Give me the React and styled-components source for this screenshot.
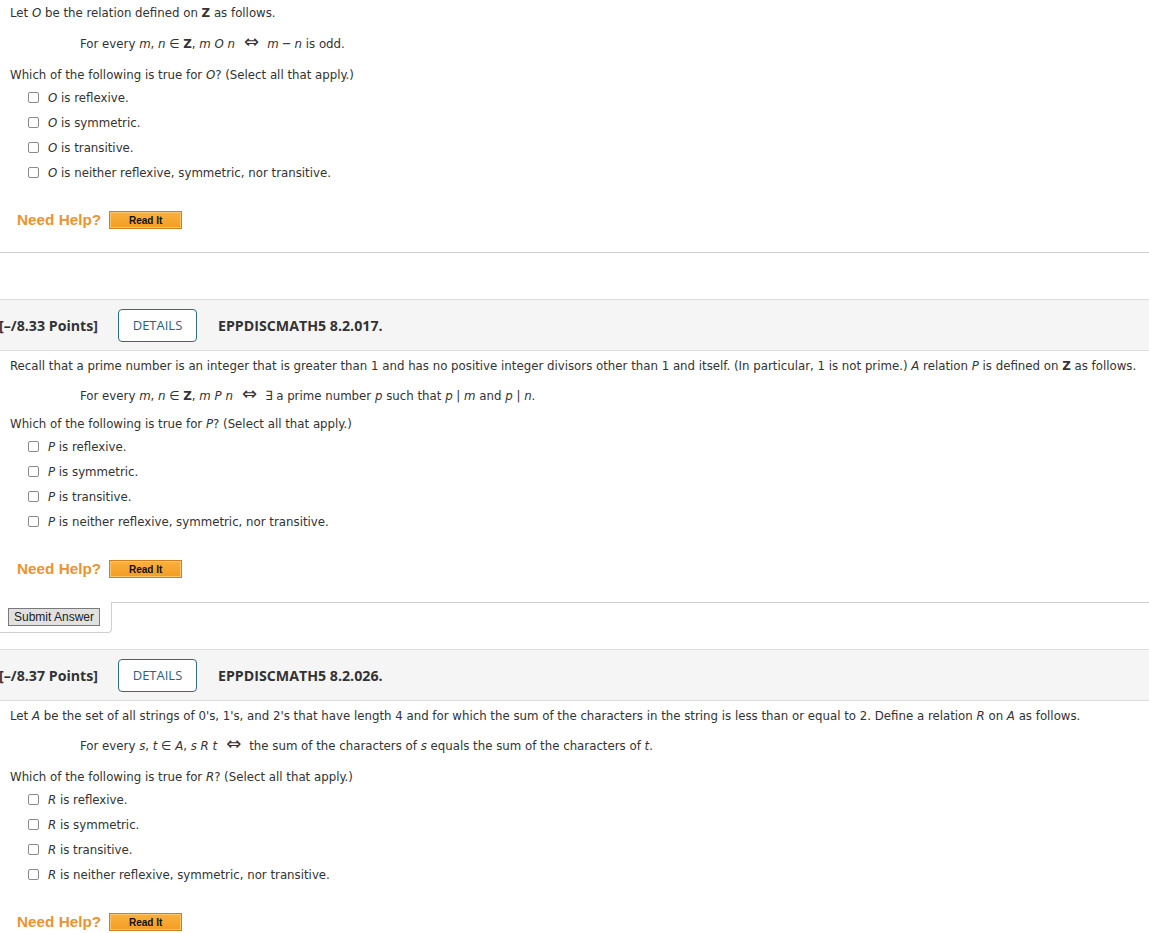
import React from 'react';
import styled, { createGlobalStyle } from 'styled-components';

const GlobalStyle = createGlobalStyle`
  html, body {
    margin: 0;
    padding: 0;
    background: #fff;
  }
  body {
    font-family: 'DejaVu Sans Condensed', 'DejaVu Sans', Verdana, sans-serif;
    font-size: 13.1px;
    color: #333;
    overflow: hidden;
  }
`;

const Page = styled.div`
  width: 1149px;
`;

const Header = styled.div`
  display: flex;
  align-items: center;
  height: 50px;
  background: #f5f5f5;
  border-top: 1px solid #dcdcdc;
  border-bottom: 1px solid #dcdcdc;
  font-family: 'Open Sans', sans-serif;
  color: #333;
`;

const Points = styled.span`
  font-weight: 700;
  font-size: 14.2px;
  margin-left: -1px;
  width: 119px;
`;

const DetailsButton = styled.button`
  height: 33px;
  width: 79px;
  border: 1px solid #2f6b88;
  border-radius: 4px;
  background: #fff;
  color: #2c5f7c;
  font-family: 'Open Sans', sans-serif;
  font-size: 13px;
  padding: 0;
  margin-right: 21px;
`;

const Code = styled.span`
  font-weight: 700;
  font-size: 14.2px;
`;

const Body = styled.div`
  padding: ${p => p.$top}px 0 0 10px;
`;

const Line = styled.div`
  line-height: 16px;
  height: 16px;
  white-space: nowrap;
  margin-top: ${p => p.$gap || 0}px;
  padding-left: ${p => p.$indent || 0}px;
`;

const Arrow = styled.span`
  font-family: 'DejaVu Sans', sans-serif;
  font-size: 18px;
  line-height: 0;
  margin: 0 8px 0 9px;
`;

const Op = styled.span`
  margin: 0 3px;
`;

const Options = styled.div`
  margin-top: 2px;
  padding-left: 18px;
`;

const Option = styled.label`
  display: flex;
  align-items: center;
  height: 25px;
  white-space: nowrap;
`;

const Box = styled.span`
  width: 9px;
  height: 9px;
  border: 1px solid #8a8a8a;
  border-radius: 2px;
  background: #fff;
  margin-right: 9px;
`;

const HelpRow = styled.div`
  display: flex;
  align-items: center;
  height: 24px;
  margin-top: 23px;
  padding-left: 7px;
  gap: 8px;
`;

const NeedHelp = styled.span`
  font-family: 'Liberation Sans', Arial, sans-serif;
  font-weight: 700;
  font-size: 15.3px;
  color: #ec9331;
`;

const ReadIt = styled.button`
  width: 73px;
  height: 18px;
  padding: 0;
  border: 1px solid #d07f1c;
  box-shadow: inset 0 0 0 1px #fbc56b;
  background: linear-gradient(#f9b13f, #f49c23);
  font-family: 'Liberation Sans', Arial, sans-serif;
  font-weight: 700;
  font-size: 10px;
  color: #111;
`;

const Footer = styled.div`
  display: flex;
  margin-top: ${p => p.$gap}px;
  margin-bottom: 16px;
  height: 31px;
`;

const SubmitTab = styled.div`
  display: flex;
  align-items: center;
  box-sizing: border-box;
  width: 112px;
  height: 31px;
  padding-left: 8px;
  border-right: 1px solid #cfcfcf;
  border-bottom: 1px solid #cfcfcf;
  border-bottom-right-radius: 4px;
`;

const SubmitButton = styled.button`
  font-family: 'Liberation Sans', Arial, sans-serif;
  font-size: 12px;
  color: #222;
  background: #e1e1e1;
  border: 1px solid #7a7a7a;
  padding: 0 5px;
  height: 18px;
  line-height: 16px;
`;

const FooterRule = styled.div`
  flex: 1;
  border-top: 1px solid #cfcfcf;
`;

const Bold = styled.b``;

const Question = ({ header, top, prompt, formula, target, options, submit, gap, footerGap }) => (
  <section>
    {header && (
      <Header>
        <Points>{header.points}</Points>
        <DetailsButton>DETAILS</DetailsButton>
        <Code>{header.code}</Code>
      </Header>
    )}
    <Body $top={top}>
      <Line>{prompt}</Line>
      <Line $gap={gap[0]} $indent={70}>{formula}</Line>
      <Line $gap={gap[1]}>Which of the following is true for <i>{target}</i>? (Select all that apply.)</Line>
      <Options>
        {options.map((o, i) => (
          <Option key={i}>
            <Box />
            <span><i>{target}</i> is {o}</span>
          </Option>
        ))}
      </Options>
      <HelpRow>
        <NeedHelp>Need Help?</NeedHelp>
        <ReadIt>Read It</ReadIt>
      </HelpRow>
    </Body>
    <Footer $gap={footerGap}>
      {submit && (
        <SubmitTab>
          <SubmitButton>Submit Answer</SubmitButton>
        </SubmitTab>
      )}
      <FooterRule />
    </Footer>
  </section>
);

const opts = ['reflexive.', 'symmetric.', 'transitive.', 'neither reflexive, symmetric, nor transitive.'];

export default function App() {
  return (
    <Page>
      <GlobalStyle />
      <Question
        top={5}
        gap={[15, 15]}
        footerGap={20}
        target="O"
        options={opts}
        prompt={<>Let <i>O</i> be the relation defined on <Bold>Z</Bold> as follows.</>}
        formula={<>For every <i>m</i>, <i>n</i> ∈ <Bold>Z</Bold>, <i>m</i> <i>O</i> <i>n</i><Arrow>⇔</Arrow><i>m</i><Op>−</Op><i>n</i> is odd.</>}
      />
      <Question
        header={{ points: '[–/8.33 Points]', code: 'EPPDISCMATH5 8.2.017.' }}
        top={7}
        gap={[14, 12]}
        footerGap={21}
        target="P"
        options={opts}
        submit
        prompt={<>Recall that a prime number is an integer that is greater than 1 and has no positive integer divisors other than 1 and itself. (In particular, 1 is not prime.) <i>A</i> relation <i>P</i> is defined on <Bold>Z</Bold> as follows.</>}
        formula={<>For every <i>m</i>, <i>n</i> ∈ <Bold>Z</Bold>, <i>m</i> <i>P</i> <i>n</i><Arrow>⇔</Arrow>∃ a prime number <i>p</i> such that <i>p</i> | <i>m</i> and <i>p</i> | <i>n</i>.</>}
      />
      <Question
        header={{ points: '[–/8.37 Points]', code: 'EPPDISCMATH5 8.2.026.' }}
        top={7}
        gap={[14, 15]}
        footerGap={20}
        target="R"
        options={opts}
        prompt={<>Let <i>A</i> be the set of all strings of 0's, 1's, and 2's that have length 4 and for which the sum of the characters in the string is less than or equal to 2. Define a relation <i>R</i> on <i>A</i> as follows.</>}
        formula={<>For every <i>s</i>, <i>t</i> ∈ <i>A</i>, <i>s</i> <i>R</i> <i>t</i><Arrow>⇔</Arrow>the sum of the characters of <i>s</i> equals the sum of the characters of <i>t</i>.</>}
      />
    </Page>
  );
}
